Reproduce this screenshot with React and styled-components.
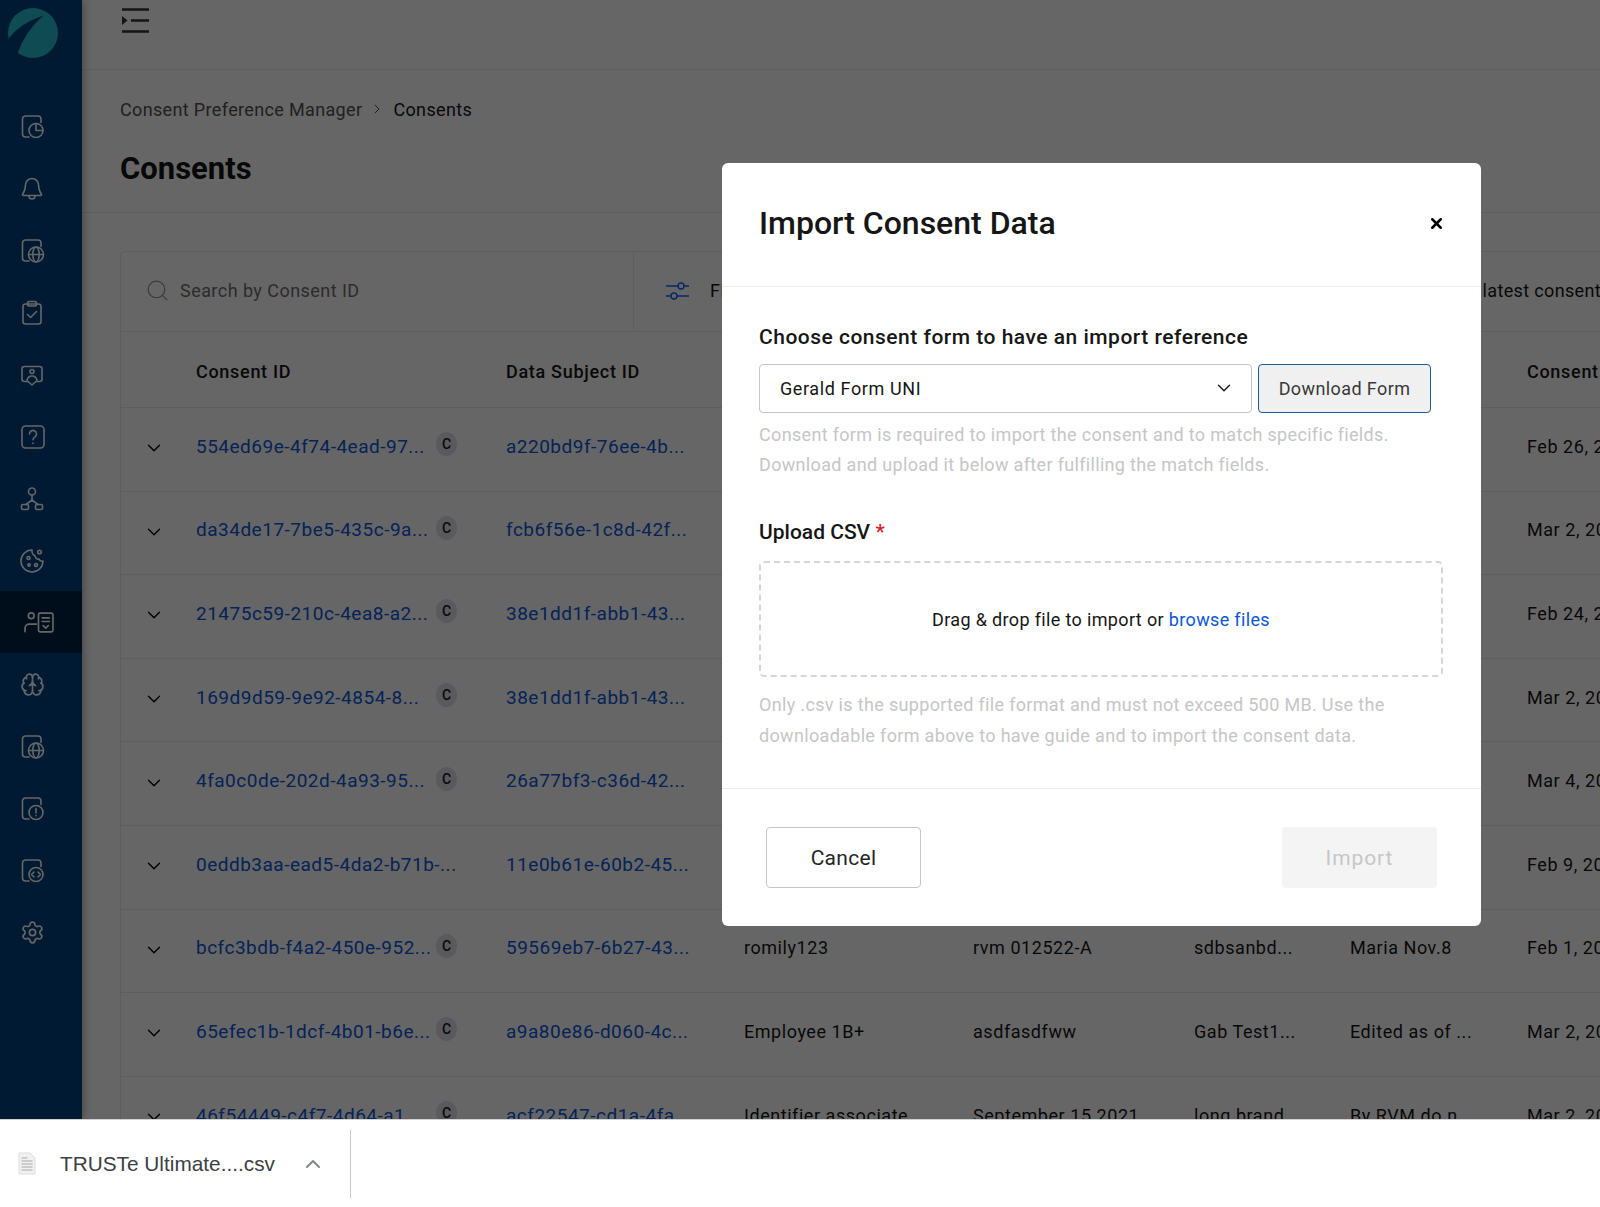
import React from "react";
import styled, { createGlobalStyle } from "styled-components";
import { Brain, ChevronDown, ChevronRight, ChevronUp, Search, Settings, X } from "lucide-react";

const FONT = `Roboto, "Liberation Sans", sans-serif`;
const LINK = "#0b57d9";

const GlobalStyle = createGlobalStyle`
  html, body {
    margin: 0;
    padding: 0;
    height: 1207px;
    overflow: hidden;
    background: #fff;
    font-family: ${FONT};
    color: #161616;
  }
  * { box-sizing: border-box; }
`;

const rows = [
  ["554ed69e-4f74-4ead-97...", true, "a220bd9f-76ee-4b...", "", "", "", "", "Feb 26, 2022"],
  ["da34de17-7be5-435c-9a...", true, "fcb6f56e-1c8d-42f...", "", "", "", "", "Mar 2, 2022"],
  ["21475c59-210c-4ea8-a2...", true, "38e1dd1f-abb1-43...", "", "", "", "", "Feb 24, 2022"],
  ["169d9d59-9e92-4854-8...", true, "38e1dd1f-abb1-43...", "", "", "", "", "Mar 2, 2022"],
  ["4fa0c0de-202d-4a93-95...", true, "26a77bf3-c36d-42...", "", "", "", "", "Mar 4, 2022"],
  ["0eddb3aa-ead5-4da2-b71b-...", false, "11e0b61e-60b2-45...", "", "", "", "", "Feb 9, 2022"],
  ["bcfc3bdb-f4a2-450e-952...", true, "59569eb7-6b27-43...", "romily123", "rvm 012522-A", "sdbsanbd...", "Maria Nov.8", "Feb 1, 2022"],
  ["65efec1b-1dcf-4b01-b6e...", true, "a9a80e86-d060-4c...", "Employee 1B+", "asdfasdfww", "Gab Test1...", "Edited as of ...", "Mar 2, 2022"],
  ["46f54449-c4f7-4d64-a1...", true, "acf22547-cd1a-4fa...", "Identifier associate", "September 15 2021", "long brand", "By RVM do n...", "Mar 2, 2022"],
];

const docOutline = "M9 22.5H5.5a3 3 0 0 1-3-3V4.5a3 3 0 0 1 3-3H18a3 3 0 0 1 3 3V8";

const sideIcons = [
  { id: "clock", el: <><path d={docOutline} /><circle cx="16" cy="16" r="7" /><path d="M16 9v7h7" /></> },
  { id: "bell", el: <><path d="M12 2a6.5 6.5 0 0 0-6.5 6.5c0 6-2.5 8-3 9.5-.2.7.2 1 1 1h17c.8 0 1.200-.3 1-1-.5-1.500-3-3.500-3-9.500A6.500 6.500 0 0 0 12 2z" /><path d="M9 19.500a3 3 0 0 0 6 0" /></> },
  { id: "globe", el: <><path d={docOutline} /><circle cx="16" cy="16" r="7.500" /><ellipse cx="16" cy="16" rx="3.200" ry="7.500" /><path d="M8.500 16h15" /></> },
  { id: "check", el: <><rect x="3" y="3.500" width="18" height="20" rx="2.500" /><rect x="7.500" y="1" width="9" height="4.500" rx="1.500" /><path d="M7.500 14l3 3 6-6" /></> },
  { id: "screen", el: <><path d="M8 19H4.500a2.500 2.500 0 0 1-2.500-2.500v-10A2.500 2.500 0 0 1 4.500 4h15A2.500 2.500 0 0 1 22 6.500v10a2.500 2.500 0 0 1-2.500 2.500H16l-4 3.500z" /><circle cx="12" cy="9" r="2" /><path d="M7 18c.5-3 2.500-4.500 5-4.500s4.500 1.500 5 4.500" /></> },
  { id: "help", el: <><rect x="2" y="1.500" width="22" height="22" rx="3.500" /><path d="M9.500 9.500a3.500 3.500 0 1 1 5.500 2.800c-1.300.9-2 1.500-2 3" /><path d="M13 18.500v.5" /></> },
  { id: "nodes", el: <><circle cx="12" cy="5" r="3.500" /><path d="M12 8.500v5M12 13.500l-6 4.500M12 13.500l6 4.500" /><rect x="1.500" y="18" width="7" height="5" rx="1.500" /><rect x="15.500" y="18" width="7" height="5" rx="1.500" /></> },
  { id: "cookie", el: <><path d="M12 1.500a11 11 0 1 0 11 11c-1.800.6-3.600-.4-4-2-2 .4-3.800-1-3.800-3C13.300 7 11.500 4.500 12 1.500z" /><circle cx="8.500" cy="9.500" r="1.500" /><circle cx="9" cy="16.500" r="1.200" /><circle cx="16" cy="16.500" r="1.500" /><circle cx="19.500" cy="3.500" r="1.800" /></> },
  { id: "person", wide: true, el: <><circle cx="7" cy="5.500" r="2.800" /><path d="M1 21v-3.500A4 4 0 0 1 5 13.500h7" /><rect x="14" y="3" width="14" height="18" rx="1.500" /><path d="M17.500 7.500h7M17.500 11h7M18.500 15l2.500 2.500 2.500-2.500" /></> },
  { id: "brain", Lucide: Brain },
  { id: "globe2", el: <><path d={docOutline} /><circle cx="16" cy="16" r="7.500" /><ellipse cx="16" cy="16" rx="3.200" ry="7.500" /><path d="M8.500 16h15" /></> },
  { id: "alert", el: <><path d={docOutline} /><circle cx="16" cy="16" r="7" /><path d="M16 12v4.500M16 19v.3" /></> },
  { id: "code", el: <><path d={docOutline} /><circle cx="16" cy="16" r="7" /><path d="M14 13.500L11.500 16l2.500 2.500M18 13.500l2.500 2.500-2.500 2.500" /></> },
  { id: "gear", Lucide: Settings },
];

const SideGlyph = ({ icon }) => {
  if (icon.Lucide) return <icon.Lucide size={25} strokeWidth={1.600} color="#fff" />;
  return (
    <svg
      width={icon.wide ? 30 : 25}
      height="25"
      viewBox={icon.wide ? "0 0 29 24" : "0 0 25 24"}
      fill="none"
      stroke="#fff"
      strokeWidth="1.600"
      strokeLinecap="round"
      strokeLinejoin="round"
    >
      {icon.el}
    </svg>
  );
};

export default function App() {
  return (
    <>
      <GlobalStyle />
      <Screen>
        <AppArea>
          <Sidebar>
            <LogoWrap>
              <svg width="50" height="50" viewBox="0 0 50 50">
                <circle cx="25" cy="25" r="25" fill="#27bbd0" />
                <path d="M35.500 7.500Q12.500 15 1 30L-2 52 9 47Q17 23 35.500 7.500z" fill="#02417f" />
              </svg>
            </LogoWrap>
            <SideNav>
              {sideIcons.map((icon) => (
                <SideItem key={icon.id} $active={icon.id === "person"}>
                  <SideGlyph icon={icon} />
                </SideItem>
              ))}
            </SideNav>
          </Sidebar>
          <Content>
            <TopBar>
              <svg width="28" height="25" viewBox="0 0 28 25" fill="none" stroke="#333" strokeWidth="2.500">
                <path d="M1 1.500h27M10 12.500h18M1 23.500h27" />
                <path d="M1 8l5.500 4.500L1 17z" fill="#333" stroke="none" />
              </svg>
            </TopBar>
            <PageHead>
              <Crumbs>
                <span>Consent Preference Manager</span>
                <CrumbArrow><ChevronRight size={16} strokeWidth={1.500} color="#525252" /></CrumbArrow>
                <CrumbCurrent>Consents</CrumbCurrent>
              </Crumbs>
              <PageTitle>Consents</PageTitle>
            </PageHead>
            <Table>
              <Toolbar>
                <SearchCell>
                  <Search size={25} strokeWidth={1.100} color="#8d8d8d" />
                  <SearchHint>Search by Consent ID</SearchHint>
                </SearchCell>
                <FilterCell>
                  <svg width="23" height="22" viewBox="0 0 23 22" fill="none" stroke="#0f62fe" strokeWidth="1.400">
                    <path d="M0 6h12M18 6h5M0 16h5M11 16h12" />
                    <circle cx="15" cy="6" r="3" />
                    <circle cx="8" cy="16" r="3" />
                  </svg>
                  <span>Filters</span>
                </FilterCell>
                <LatestCell>Show latest consent</LatestCell>
              </Toolbar>
              <HeadRow>
                <span />
                <HeadCell>Consent ID</HeadCell>
                <HeadCell>Data Subject ID</HeadCell>
                <span />
                <span />
                <span />
                <span />
                <HeadCell>Consent Date</HeadCell>
              </HeadRow>
              {rows.map((row) => (
                <DataRow key={row[0]}>
                  <ExpandCell><ChevronDown size={22} strokeWidth={1.500} color="#000" /></ExpandCell>
                  <IdCell>
                    <IdLink>{row[0]}</IdLink>
                    {row[1] && <Badge>C</Badge>}
                  </IdCell>
                  <Link>{row[2]}</Link>
                  <Cell>{row[3]}</Cell>
                  <Cell>{row[4]}</Cell>
                  <Cell>{row[5]}</Cell>
                  <Cell>{row[6]}</Cell>
                  <Cell>{row[7]}</Cell>
                </DataRow>
              ))}
            </Table>
          </Content>
          <Overlay>
            <Modal>
              <ModalHead>
                <ModalTitle>Import Consent Data</ModalTitle>
                <X size={17} strokeWidth={3.500} color="#000" />
              </ModalHead>
              <ModalBody>
                <FieldLabel $spacing={0.5}>Choose consent form to have an import reference</FieldLabel>
                <SelectRow>
                  <SelectBox>
                    <span>Gerald Form UNI</span>
                    <ChevronDown size={22} strokeWidth={1.500} color="#161616" />
                  </SelectBox>
                  <DownloadButton>Download Form</DownloadButton>
                </SelectRow>
                <Hint $top={7} $lh={29.5}>
                  Consent form is required to import the consent and to match specific fields.
                  <br />
                  Download and upload it below after fulfilling the match fields.
                </Hint>
                <FieldLabel $top={40}>
                  Upload CSV <Required>*</Required>
                </FieldLabel>
                <DropZone>
                  Drag &amp; drop file to import or&nbsp;<BrowseLink>browse files</BrowseLink>
                </DropZone>
                <Hint $top={12} $lh={31}>
                  Only .csv is the supported file format and must not exceed 500 MB. Use the
                  <br />
                  downloadable form above to have guide and to import the consent data.
                </Hint>
              </ModalBody>
              <ModalFoot>
                <CancelButton>Cancel</CancelButton>
                <ImportButton>Import</ImportButton>
              </ModalFoot>
            </Modal>
          </Overlay>
        </AppArea>
        <DownloadBar>
          <FileIcon width="18" height="23" viewBox="0 0 18 23">
            <path d="M1 1h11l5 5v16H1z" fill="#f1f1f1" stroke="#dcdcdc" />
            <path d="M3.500 6h6M3.500 9h11M3.500 12h11M3.500 15h11M3.500 18h11" stroke="#a8a8a8" strokeWidth="1.200" />
          </FileIcon>
          <FileName>TRUSTe Ultimate....csv</FileName>
          <ChevronUp size={24} strokeWidth={2} color="#80868b" />
          <BarDivider />
        </DownloadBar>
      </Screen>
    </>
  );
}

const Screen = styled.div`
  width: 1600px;
  height: 1207px;
  display: flex;
  flex-direction: column;
  overflow: hidden;
`;

const AppArea = styled.div`
  position: relative;
  height: 1119px;
  display: flex;
  overflow: hidden;
  background: #fff;
`;

const Sidebar = styled.aside`
  width: 82px;
  flex-shrink: 0;
  padding-top: 8px;
  background: #02417f;
  box-shadow: 2px 0 8px rgba(0, 0, 0, 0.3);
  z-index: 1;
`;

const LogoWrap = styled.div`
  padding-left: 8px;
  height: 50px;
`;

const SideNav = styled.nav`
  margin-top: 37px;
  display: flex;
  flex-direction: column;
`;

const SideItem = styled.div`
  height: 62px;
  display: flex;
  align-items: center;
  padding-left: ${(p) => (p.$active ? "24px" : "20px")};
  background: ${(p) => (p.$active ? "#012448" : "transparent")};
`;

const Content = styled.main`
  flex: 1;
  min-width: 0;
`;

const TopBar = styled.header`
  height: 70px;
  padding: 8px 0 0 39px;
  border-bottom: 1px solid #eaeaea;
`;

const PageHead = styled.div`
  height: 143px;
  padding: 27px 0 0 38px;
  border-bottom: 1px solid #eaeaea;
`;

const Crumbs = styled.div`
  display: flex;
  align-items: center;
  height: 24px;
  font-size: 18px;
  letter-spacing: 0.35px;
  color: #525252;
`;

const CrumbArrow = styled.span`
  display: flex;
  margin: 0 8px 0 7px;
`;

const CrumbCurrent = styled.span`
  color: #161616;
`;

const PageTitle = styled.h1`
  margin: 28px 0 0;
  font-size: 31px;
  line-height: 40px;
  font-weight: 700;
  color: #161616;
`;

const Table = styled.section`
  margin: 38px 0 0 38px;
  width: 1600px;
  border: 1px solid #e8e8e8;
  border-radius: 4px 0 0 0;
  font-size: 18px;
  letter-spacing: 0.55px;
`;

const Toolbar = styled.div`
  height: 80px;
  display: flex;
  align-items: center;
  padding-bottom: 2px;
  border-bottom: 1px solid #e8e8e8;
`;

const SearchCell = styled.div`
  width: 513px;
  height: 100%;
  display: flex;
  align-items: center;
  gap: 10px;
  padding-left: 24px;
  border-right: 1px solid #e8e8e8;
`;

const SearchHint = styled.span`
  color: #6f6f6f;
  letter-spacing: 0.45px;
`;

const FilterCell = styled.div`
  width: 798px;
  display: flex;
  align-items: center;
  gap: 21px;
  padding-left: 32px;
`;

const LatestCell = styled.div`
  white-space: nowrap;
  letter-spacing: 0.35px;
`;

const columns = "75px 310px 238px 229px 221px 156px 177px 200px";

const HeadRow = styled.div`
  height: 76px;
  padding-top: 3px;
  display: grid;
  grid-template-columns: ${columns};
  align-items: center;
  border-bottom: 1px solid #e8e8e8;
`;

const HeadCell = styled.div`
  font-weight: 500;
  letter-spacing: 0.7px;
  color: #161616;
  white-space: nowrap;
`;

const DataRow = styled.div`
  height: 83.6px;
  padding-bottom: 6px;
  display: grid;
  grid-template-columns: ${columns};
  align-items: center;
  border-bottom: 1px solid #e8e8e8;
`;

const ExpandCell = styled.div`
  display: flex;
  padding: 4px 0 0 22px;
`;

const IdCell = styled.div`
  display: flex;
  align-items: center;
`;

const Link = styled.span`
  color: ${LINK};
  font-size: 19px;
  letter-spacing: 0.5px;
  white-space: nowrap;
`;

const IdLink = styled(Link)`
  width: 240px;
  flex-shrink: 0;
`;

const Badge = styled.span`
  width: 21px;
  height: 24px;
  margin-bottom: 4px;
  display: flex;
  align-items: center;
  justify-content: center;
  border-radius: 50%;
  background: #e0dfe8;
  font-size: 14px;
  font-weight: 500;
  letter-spacing: 0;
  color: #161616;
`;

const Cell = styled.span`
  color: #161616;
  white-space: nowrap;
`;

const Overlay = styled.div`
  position: absolute;
  inset: 0;
  z-index: 2;
  background: rgba(0, 0, 0, 0.6);
`;

const Modal = styled.div`
  position: absolute;
  left: 722px;
  top: 163px;
  width: 759px;
  height: 763px;
  display: flex;
  flex-direction: column;
  background: #fff;
  border-radius: 6px;
`;

const ModalHead = styled.div`
  height: 124px;
  flex-shrink: 0;
  display: flex;
  align-items: center;
  justify-content: space-between;
  padding: 0 36px 3px 37px;
  border-bottom: 1px solid #ececec;
`;

const ModalTitle = styled.h2`
  margin: 0;
  font-size: 32px;
  font-weight: 500;
  color: #161616;
`;

const ModalBody = styled.div`
  flex: 1;
  padding: 37px 37px 0;
`;

const FieldLabel = styled.div`
  margin-top: ${(p) => p.$top || 0}px;
  font-size: 21px;
  line-height: 26px;
  font-weight: 500;
  letter-spacing: ${(p) => p.$spacing || 0}px;
  color: #161616;
`;

const Required = styled.span`
  color: #da1e28;
`;

const SelectRow = styled.div`
  margin-top: 14px;
  display: flex;
  gap: 6px;
`;

const SelectBox = styled.div`
  width: 493px;
  height: 49px;
  display: flex;
  align-items: center;
  justify-content: space-between;
  padding: 0 16px 1px 20px;
  border: 1px solid #c6c6c6;
  border-radius: 4px;
  font-size: 18px;
  letter-spacing: 0.6px;
  color: #161616;
`;

const DownloadButton = styled.div`
  width: 173px;
  height: 49px;
  padding-bottom: 1px;
  display: flex;
  align-items: center;
  justify-content: center;
  border: 1.500px solid #1d5b94;
  border-radius: 4px;
  background: #f0f0f0;
  font-size: 18px;
  letter-spacing: 0.4px;
  color: #393939;
`;

const Hint = styled.div`
  margin-top: ${(p) => p.$top}px;
  font-size: 18px;
  line-height: ${(p) => p.$lh}px;
  letter-spacing: 0.33px;
  color: #c6c6c6;
  white-space: nowrap;
`;

const DropZone = styled.div`
  margin-top: 16px;
  width: 684px;
  height: 116px;
  display: flex;
  align-items: center;
  justify-content: center;
  border: 2px dashed #d6d6d6;
  border-radius: 5px;
  font-size: 18px;
  letter-spacing: 0.35px;
  color: #161616;
`;

const BrowseLink = styled.span`
  color: ${LINK};
`;

const ModalFoot = styled.div`
  height: 138px;
  flex-shrink: 0;
  display: flex;
  align-items: flex-start;
  justify-content: space-between;
  padding: 38px 44px 0 44px;
  border-top: 1px solid #ececec;
`;

const CancelButton = styled.div`
  width: 155px;
  height: 61px;
  display: flex;
  align-items: center;
  justify-content: center;
  border: 1.500px solid #c6c6c6;
  border-radius: 4px;
  font-size: 21px;
  letter-spacing: 0.3px;
  color: #262626;
`;

const ImportButton = styled.div`
  width: 155px;
  height: 61px;
  display: flex;
  align-items: center;
  justify-content: center;
  border-radius: 4px;
  background: #f4f4f4;
  font-size: 21px;
  letter-spacing: 0.9px;
  color: #c6c6c6;
`;

const DownloadBar = styled.footer`
  flex: 1;
  display: flex;
  align-items: center;
  padding-left: 18px;
  border-top: 1px solid #d0d0d0;
  background: #fff;
`;

const FileIcon = styled.svg`
  flex-shrink: 0;
  margin-right: 24px;
`;

const FileName = styled.span`
  width: 241px;
  font-family: "Liberation Sans", sans-serif;
  font-size: 20.800px;
  color: #3c4043;
`;

const BarDivider = styled.span`
  width: 1px;
  height: 68px;
  margin-left: 25px;
  background: #c8c8c8;
`;
